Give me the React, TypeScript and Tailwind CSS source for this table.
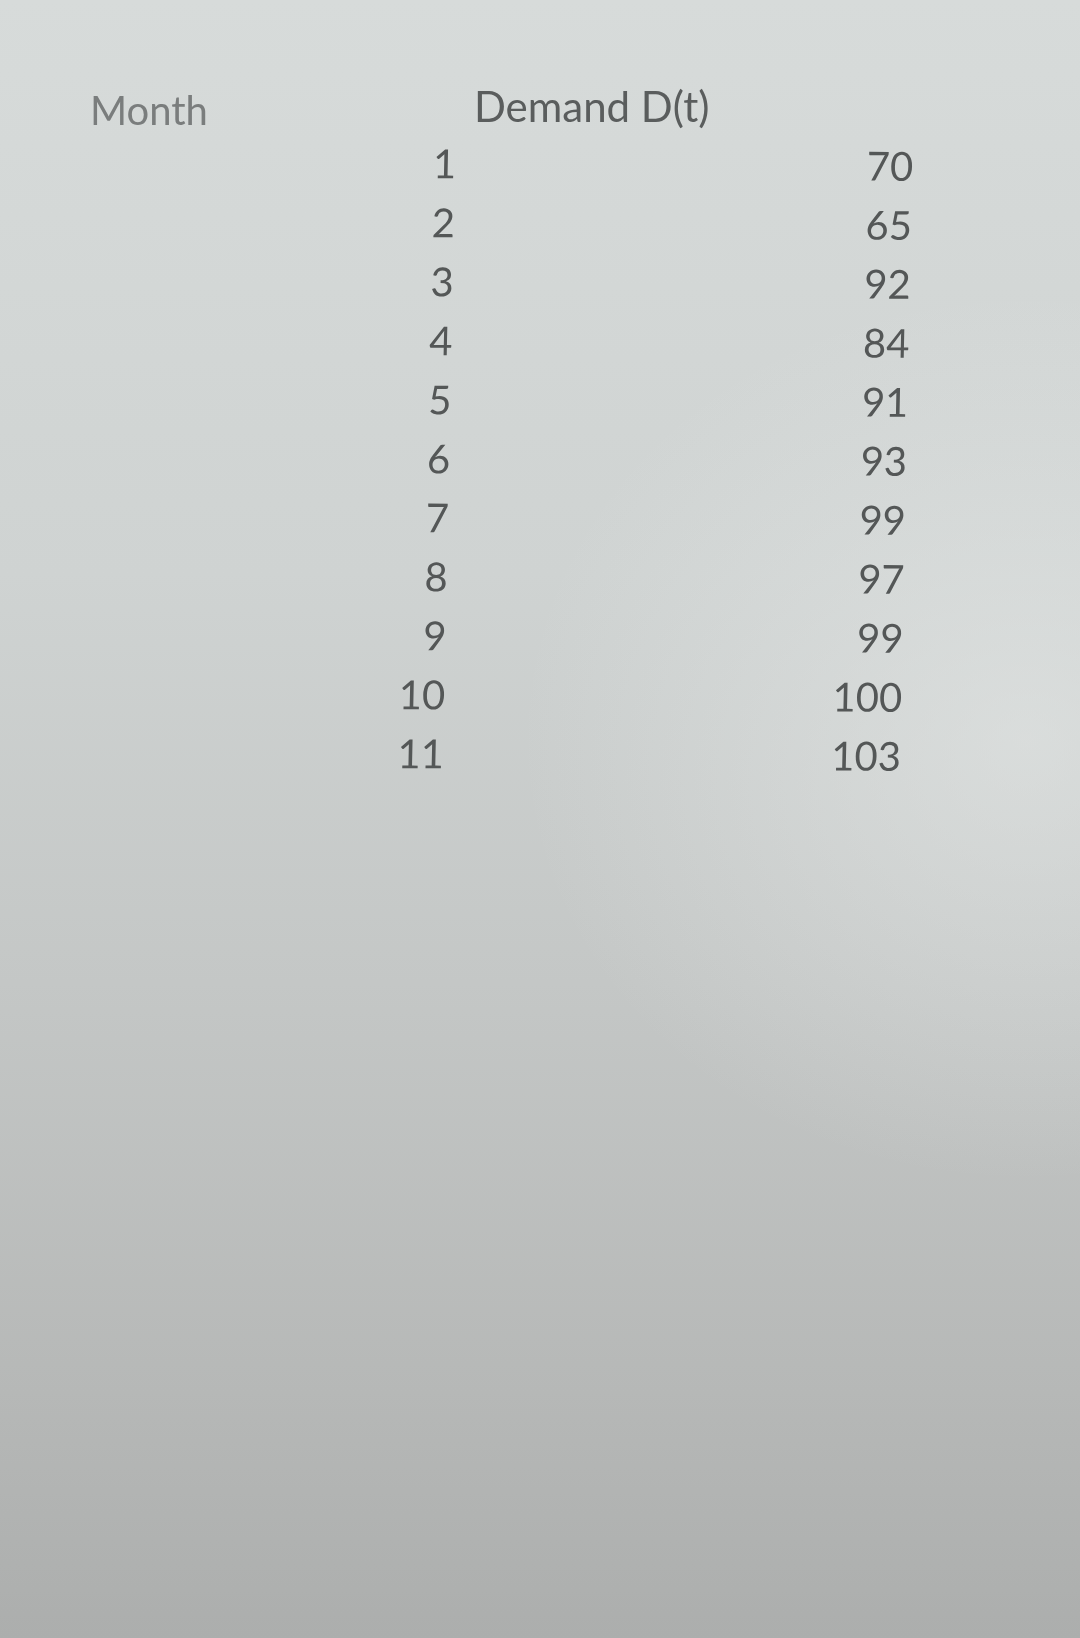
const rows = [
  { month: 1, demand: 70 },
  { month: 2, demand: 65 },
  { month: 3, demand: 92 },
  { month: 4, demand: 84 },
  { month: 5, demand: 91 },
  { month: 6, demand: 93 },
  { month: 7, demand: 99 },
  { month: 8, demand: 97 },
  { month: 9, demand: 99 },
  { month: 10, demand: 100 },
  { month: 11, demand: 103 },
];

const App = () => {
  return (
    <div className="h-[1638px] w-[1080px] overflow-hidden bg-[radial-gradient(ellipse_at_95%_45%,rgba(232,235,234,0.5),transparent_35%),linear-gradient(to_bottom,#d7dbda_0%,#cfd3d2_35%,#c4c7c6_60%,#b6b8b7_85%,#acaead_100%)] font-['Lato','Liberation_Sans',sans-serif] text-[40px] leading-[59px] text-[#545757]">
      <div className="pt-[77px] blur-[0.5px]">
        {/* Header */}
        <div className="flex h-[55px]">
          <span className="ml-[90px] mt-[4px] text-[#7a7d7d]">Month</span>
          <span className="ml-[266px] text-[42px] text-[#5a5d5d]">Demand D(t)</span>
        </div>

        {/* Data */}
        <div className="origin-top-left -skew-x-[1.2deg] skew-y-[0.3deg]">
          {rows.map((row) => (
            <div key={row.month} className="flex">
              <div className="w-[457px] text-right">{row.month}</div>
              <div className="w-[457px] text-right">{row.demand}</div>
            </div>
          ))}
        </div>
      </div>
    </div>
  );
};

export default App;
